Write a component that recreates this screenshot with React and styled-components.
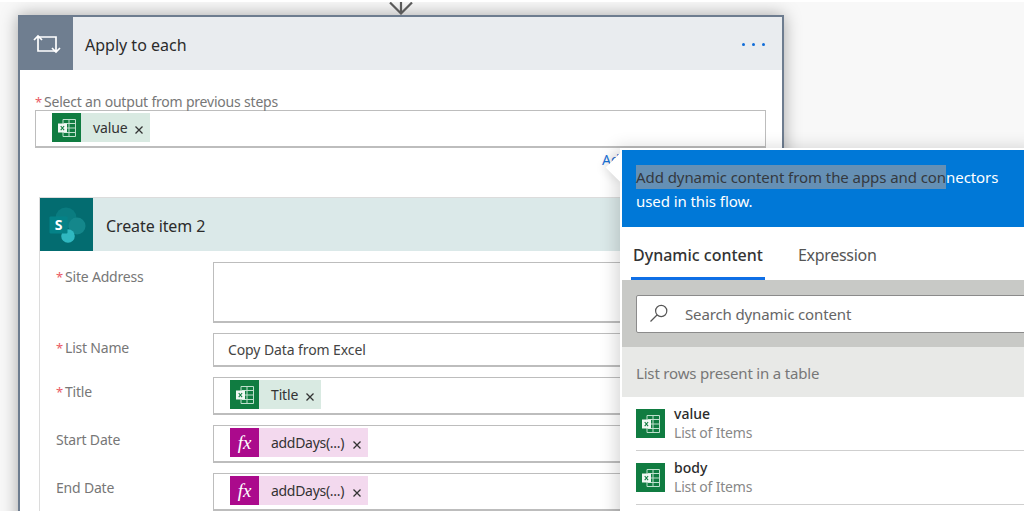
import React from "react";
import styled, { createGlobalStyle } from "styled-components";

const Global = createGlobalStyle`
  html, body { margin: 0; padding: 0; background: #f8f8f8; }
  body { font-family: "Noto Sans", "Open Sans", Arial, sans-serif; color: #333; }
  #root { height: 511px; overflow: hidden; }
`;

const Page = styled.div`
  position: relative;
  width: 1024px;
  height: 511px;
  overflow: hidden;
  padding-left: 18px;
  box-sizing: border-box;
  border-top: 2px solid #fff;
`;
const Connector = styled.div`
  width: 766px;
  height: 13px;
  display: flex;
  justify-content: center;
  align-items: flex-end;
  position: relative;
  z-index: 1;
`;
const Card = styled.section`
  width: 766px;
  height: 600px;
  box-sizing: border-box;
  background: #fff;
  border: 2px solid #6d7c8f;
  border-bottom: none;
  box-shadow: 0 0 16px rgba(0, 0, 0, 0.34);
`;
const CardHeader = styled.header`
  display: flex;
  align-items: center;
  box-sizing: border-box;
  height: 53px;
  background: #e9ecef;
`;
const LoopTile = styled.div`
  width: 53px;
  height: 53px;
  background: #6f7e90;
  display: flex;
  align-items: center;
  justify-content: center;
  flex: none;
`;
const CardTitle = styled.h2`
  margin: 2px 0 0 12px;
  flex: 1;
  font-size: 16px;
  font-weight: 400;
  color: #2b2b2b;
`;
const Dots = styled.div`
  display: flex;
  gap: 7px;
  margin: 2px 17px 0 0;
`;
const Dot = styled.span`
  width: 3px;
  height: 3px;
  border-radius: 50%;
  background: #0f6cd8;
`;
const CardBody = styled.div`
  padding: 23px 16px 0 15px;
`;
const TopLabel = styled.div`
  font-size: 14px;
  line-height: 18px;
  letter-spacing: -0.2px;
  color: #777;
  display: flex;
  margin-bottom: -1px;
`;
const Star = styled.span`
  color: #ea5a64;
  width: 8px;
  margin-right: 1px;
  font-size: 13px;
  flex: none;
`;
const TokenBox = styled.div`
  display: flex;
  align-items: flex-start;
  box-sizing: border-box;
  height: 38px;
  padding: 2px 0 0 16px;
  background: #fff;
  border: 1px solid #bdbdbd;
  border-bottom-width: 2px;
`;
const Token = styled.div`
  display: flex;
  align-items: stretch;
  height: 29px;
  background: ${(p) => (p.$fx ? "#f3d9ee" : "#d9eae2")};
`;
const TokenIcon = styled.div`
  width: 29px;
  height: 29px;
  margin-right: 1px;
  flex: none;
  display: flex;
  align-items: center;
  justify-content: center;
  background: ${(p) => (p.$fx ? "#ab0a8c" : "#107c41")};
`;
const Fx = styled.span`
  font-family: "Liberation Serif", serif;
  font-style: italic;
  font-weight: 400;
  font-size: 19px;
  line-height: 26px;
  color: #fff;
`;
const TokenText = styled.span`
  padding-left: 11px;
  font-size: 14px;
  line-height: 29px;
  letter-spacing: ${(p) => (p.$fx ? -0.3 : -0.15)}px;
  color: #333;
`;
const TokenClose = styled.span`
  display: flex;
  align-items: center;
  padding: 5px 6px 0 ${(p) => (p.$fx ? 8 : 7)}px;
`;
const AddLink = styled.div`
  margin-top: 3px;
  padding-left: 567px;
  height: 46px;
  font-size: 14px;
  line-height: 18px;
  color: #1a73d8;
  white-space: nowrap;
`;
const InnerCard = styled.section`
  margin-left: 4px;
  width: 710px;
  box-sizing: border-box;
  border: 1px solid #dcdcdc;
  border-bottom: none;
  background: #fff;
`;
const InnerHeader = styled.header`
  display: flex;
  align-items: center;
  height: 53px;
  background: #dbe9e9;
`;
const SharePointTile = styled.div`
  width: 53px;
  height: 53px;
  background: #036c70;
  display: flex;
  align-items: center;
  justify-content: center;
  flex: none;
`;
const InnerTitle = styled.h3`
  margin: 2px 0 0 13px;
  font-size: 16px;
  font-weight: 400;
  letter-spacing: -0.1px;
  color: #2b2b2b;
`;
const Form = styled.div`
  padding: 11px 0 0 16px;
  display: flex;
  flex-direction: column;
  gap: 10px;
`;
const Row = styled.div`
  display: grid;
  grid-template-columns: 157px 1fr;
`;
const RowLabel = styled.div`
  display: flex;
  font-size: 14px;
  line-height: 18px;
  letter-spacing: -0.2px;
  padding-top: 6px;
  color: #777;
`;
const PlainBox = styled.div`
  box-sizing: border-box;
  height: ${(p) => p.$h}px;
  padding-left: 14px;
  border: 1px solid #bdbdbd;
  border-bottom-width: 2px;
  font-size: 14px;
  line-height: 32px;
  letter-spacing: -0.1px;
  color: #444;
`;

const Panel = styled.aside`
  position: absolute;
  left: 620px;
  top: 146px;
  width: 420px;
  height: 380px;
  box-sizing: border-box;
  padding: 2px 0 0 2px;
  background: #fff;
  box-shadow: -4px 0 16px rgba(0, 0, 0, 0.16);
  z-index: 3;
`;
const Beak = styled.div`
  position: absolute;
  left: -10px;
  top: 9px;
  width: 21px;
  height: 21px;
  background: #fff;
  transform: rotate(45deg);
  box-shadow: -3px 3px 8px rgba(0, 0, 0, 0.08);
`;
const Banner = styled.div`
  position: relative;
  box-sizing: border-box;
  height: 77px;
  padding: 15px 20px 0 14px;
  background: #0078d7;
  color: #fff;
  font-size: 15px;
  line-height: 24px;
  letter-spacing: -0.07px;
  width: 402px;
`;
const Selected = styled.span`
  display: inline-block;
  background: #6590b5;
  color: #34393f;
`;
const Tabs = styled.nav`
  display: flex;
  height: 53px;
  padding-left: 9px;
  gap: 31px;
`;
const Tab = styled.div`
  box-sizing: border-box;
  height: 53px;
  padding: 16px 2px 0;
  font-size: 16px;
  line-height: 24px;
  letter-spacing: ${(p) => (p.$active ? 0 : -0.3)}px;
  color: ${(p) => (p.$active ? "#333" : "#555")};
  font-weight: ${(p) => (p.$active ? 500 : 400)};
  border-bottom: 3px solid ${(p) => (p.$active ? "#0f6fe6" : "transparent")};
`;
const SearchBand = styled.div`
  height: 67px;
  box-sizing: border-box;
  padding: 15px 0 0 14px;
  background: #c8c9c6;
`;
const SearchBox = styled.div`
  display: flex;
  align-items: center;
  box-sizing: border-box;
  height: 38px;
  width: 420px;
  padding-left: 12px;
  gap: 16px;
  background: #fff;
  border: 1px solid #8b8b8b;
  border-radius: 2px;
  font-size: 15px;
  letter-spacing: -0.13px;
  color: #666;
`;
const SectionHead = styled.div`
  height: 50px;
  box-sizing: border-box;
  padding: 14px 0 0 14px;
  background: #e8e9e7;
  font-size: 15px;
  line-height: 24px;
  letter-spacing: -0.18px;
  color: #777;
`;
const Items = styled.div`
  padding-left: 14px;
`;
const Item = styled.div`
  display: flex;
  align-items: center;
  gap: 9px;
  height: 53px;
  border-bottom: 1px solid #cfcfcf;
`;
const ItemIcon = styled.div`
  width: 29px;
  height: 29px;
  background: #107c41;
  display: flex;
  align-items: center;
  justify-content: center;
  flex: none;
`;
const ItemText = styled.div`
  display: flex;
  flex-direction: column;
  margin-top: -1px;
`;
const ItemName = styled.span`
  font-size: 14px;
  line-height: 19px;
  font-weight: 500;
  color: #2b2b2b;
`;
const ItemSub = styled.span`
  font-size: 14px;
  line-height: 19px;
  letter-spacing: -0.2px;
  color: #888;
`;

const ExcelGlyph = () => (
  <svg width="20" height="20" viewBox="0 0 20 20" fill="none">
    <path d="M6 1.5h12.5v17H6z" stroke="#bfe0cd" strokeWidth="1" />
    <path d="M12 1.5v17M7 5.5h11.5M7 10h11.5M7 14.5h11.5" stroke="#bfe0cd" strokeWidth="1" />
    <rect x="1" y="5.5" width="9" height="9" fill="#f2f8f4" />
    <path d="M3.7 8l3.4 4.2M7.1 8l-3.4 4.2" stroke="#107c41" strokeWidth="1.1" />
  </svg>
);
const Close = () => (
  <svg width="10" height="10" viewBox="0 0 10 10">
    <path d="M1.5 1.5l7 7M8.5 1.5l-7 7" stroke="#333" strokeWidth="1.3" />
  </svg>
);
const LoopIcon = () => (
  <svg width="28" height="20" viewBox="0 0 28 20" fill="none" stroke="#fff" strokeWidth="1.7">
    <path d="M1 6l4-4 4 4M5 2.5V17h17" />
    <path d="M27 14l-4 4-4-4M23 17.5V3H6" />
  </svg>
);
const SharePointIcon = () => (
  <svg width="38" height="38" viewBox="0 0 38 38">
    <circle cx="18" cy="12" r="10.5" fill="#0a7c80" />
    <circle cx="29" cy="20" r="8.5" fill="#14878b" />
    <circle cx="20" cy="30" r="6.8" fill="#2fb8c0" />
    <rect x="1.5" y="10.5" width="18" height="17" rx="1" fill="#048287" />
    <text x="10.5" y="24" textAnchor="middle" fontFamily="'Noto Sans', sans-serif" fontWeight="700" fontSize="14" fill="#fff">S</text>
  </svg>
);
const Magnifier = () => (
  <svg width="20" height="20" viewBox="0 0 20 20" fill="none" stroke="#555" strokeWidth="1.2" style={{ flex: "none" }}>
    <circle cx="12.2" cy="7" r="5.6" />
    <path d="M8 11L1.5 17.5" />
  </svg>
);
const DownArrow = () => (
  <svg width="26" height="13" viewBox="0 0 26 13" fill="none" stroke="#5a5a5a" strokeWidth="2.2">
    <path d="M13 0v11.5M2 0.500L13 11.500 24 0.500" />
  </svg>
);

const ChipToken = ({ fx, children }) => (
  <Token $fx={fx}>
    <TokenIcon $fx={fx}>{fx ? <Fx>fx</Fx> : <ExcelGlyph />}</TokenIcon>
    <TokenText $fx={fx}>{children}</TokenText>
    <TokenClose $fx={fx}><Close /></TokenClose>
  </Token>
);

export default function App() {
  return (
    <>
      <Global />
      <Page>
        <Connector><DownArrow /></Connector>
        <Card>
          <CardHeader>
            <LoopTile><LoopIcon /></LoopTile>
            <CardTitle>Apply to each</CardTitle>
            <Dots><Dot /><Dot /><Dot /></Dots>
          </CardHeader>
          <CardBody>
            <TopLabel><Star>*</Star>Select an output from previous steps</TopLabel>
            <TokenBox><ChipToken>value</ChipToken></TokenBox>
            <AddLink>Add dynamic content</AddLink>
            <InnerCard>
              <InnerHeader>
                <SharePointTile><SharePointIcon /></SharePointTile>
                <InnerTitle>Create item 2</InnerTitle>
              </InnerHeader>
              <Form>
                <Row>
                  <RowLabel><Star>*</Star>Site Address</RowLabel>
                  <PlainBox $h={61} />
                </Row>
                <Row>
                  <RowLabel><Star>*</Star>List Name</RowLabel>
                  <PlainBox $h={34}>Copy Data from Excel</PlainBox>
                </Row>
                <Row>
                  <RowLabel><Star>*</Star>Title</RowLabel>
                  <TokenBox><ChipToken>Title</ChipToken></TokenBox>
                </Row>
                <Row>
                  <RowLabel>Start Date</RowLabel>
                  <TokenBox><ChipToken fx>addDays(...)</ChipToken></TokenBox>
                </Row>
                <Row>
                  <RowLabel>End Date</RowLabel>
                  <TokenBox><ChipToken fx>addDays(...)</ChipToken></TokenBox>
                </Row>
              </Form>
            </InnerCard>
          </CardBody>
        </Card>
        <Panel>
          <Beak />
          <Banner>
            <Selected>Add dynamic content from the apps and con</Selected>nectors used in this flow.
          </Banner>
          <Tabs>
            <Tab $active>Dynamic content</Tab>
            <Tab>Expression</Tab>
          </Tabs>
          <SearchBand>
            <SearchBox><Magnifier />Search dynamic content</SearchBox>
          </SearchBand>
          <SectionHead>List rows present in a table</SectionHead>
          <Items>
            <Item>
              <ItemIcon><ExcelGlyph /></ItemIcon>
              <ItemText><ItemName>value</ItemName><ItemSub>List of Items</ItemSub></ItemText>
            </Item>
            <Item>
              <ItemIcon><ExcelGlyph /></ItemIcon>
              <ItemText><ItemName>body</ItemName><ItemSub>List of Items</ItemSub></ItemText>
            </Item>
          </Items>
        </Panel>
      </Page>
    </>
  );
}
